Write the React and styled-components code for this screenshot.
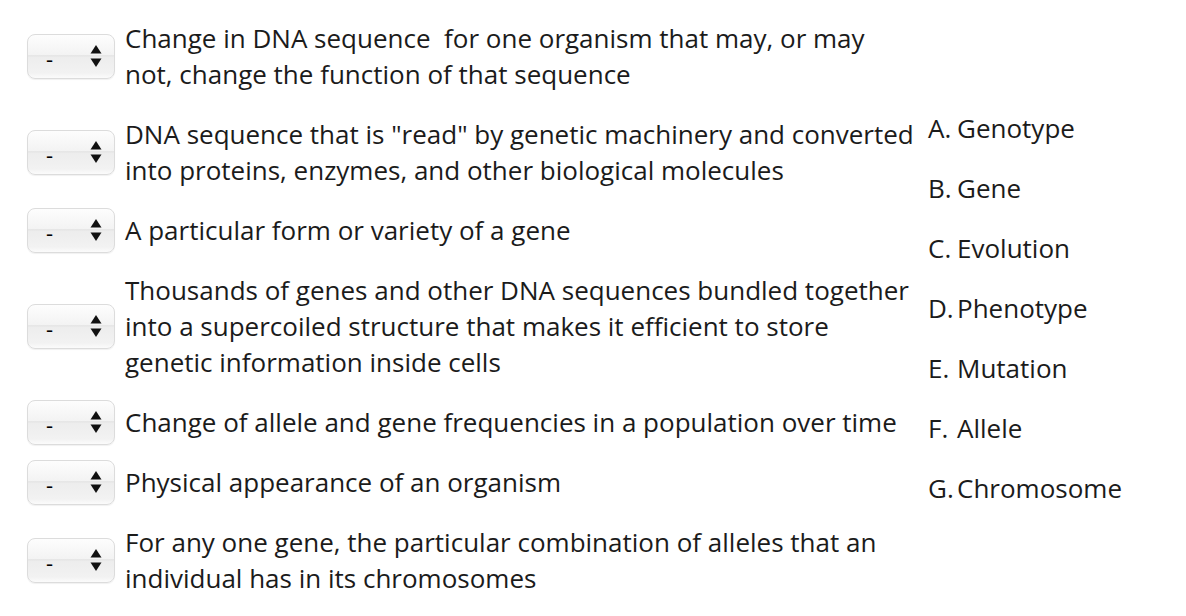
import React from "react";
import styled, { createGlobalStyle } from "styled-components";

const GlobalStyle = createGlobalStyle`
  html, body {
    margin: 0;
    padding: 0;
    background: #ffffff;
  }
  body {
    font-family: "Open Sans", "Noto Sans", sans-serif;
    color: #1b1b1b;
  }
`;

const Sheet = styled.div`
  display: flex;
  align-items: center;
  padding: 8px 0 0 27px;
`;

const Prompts = styled.div`
  display: flex;
  flex-direction: column;
`;

const Row = styled.div`
  display: flex;
  align-items: center;
`;

const Picker = styled.div`
  flex: none;
  box-sizing: border-box;
  width: 88px;
  height: 45px;
  margin: 7px 0;
  display: flex;
  align-items: center;
  justify-content: space-between;
  padding: 0 12px 0 18px;
  border: 1px solid #dcdcdc;
  border-radius: 8px;
  background: linear-gradient(
    to bottom,
    #fdfdfd 0%,
    #f3f3f3 46%,
    #e4e4e4 48%,
    #ededed 52%,
    #f2f2f2 88%,
    #fbfbfb 100%
  );
  box-shadow: 0 1px 1px rgba(0, 0, 0, 0.06);
`;

const Dash = styled.span`
  font-size: 22px;
  line-height: 1;
  color: #000;
  padding-top: 3px;
`;

const Prompt = styled.div`
  width: 790px;
  margin-left: 10px;
  padding: 12px 0;
  font-size: 26px;
  line-height: 36px;
`;

const Answers = styled.ol`
  list-style: none;
  margin: 0 0 0 13px;
  padding: 0;
  display: flex;
  flex-direction: column;
`;

const Answer = styled.li`
  display: flex;
  align-items: center;
  height: 60px;
  font-size: 26px;
`;

const Letter = styled.span`
  display: inline-block;
  width: 29px;
`;

const Arrows = () => (
  <svg width="12" height="24" viewBox="0 0 12 24" aria-hidden="true">
    <path d="M6 1 L11.5 9.5 L0.5 9.5 Z" fill="#111" />
    <path d="M6 23 L11.5 14.5 L0.5 14.5 Z" fill="#111" />
  </svg>
);

const prompts = [
  "Change in DNA sequence \u00a0for one organism that may, or may not, change the function of that sequence",
  'DNA sequence that is "read" by genetic machinery and converted into proteins, enzymes, and other biological molecules',
  "A particular form or variety of a gene",
  "Thousands of genes and other DNA sequences bundled together into a supercoiled structure that makes it efficient to store genetic information inside cells",
  "Change of allele and gene frequencies in a population over time",
  "Physical appearance of an organism",
  "For any one gene, the particular combination of alleles that an individual has in its chromosomes",
];

const answers = [
  ["A.", "Genotype"],
  ["B.", "Gene"],
  ["C.", "Evolution"],
  ["D.", "Phenotype"],
  ["E.", "Mutation"],
  ["F.", "Allele"],
  ["G.", "Chromosome"],
];

export default function App() {
  return (
    <>
      <GlobalStyle />
      <Sheet>
        <Prompts>
          {prompts.map((text) => (
            <Row key={text}>
              <Picker>
                <Dash>-</Dash>
                <Arrows />
              </Picker>
              <Prompt>{text}</Prompt>
            </Row>
          ))}
        </Prompts>
        <Answers>
          {answers.map(([letter, word]) => (
            <Answer key={letter}>
              <Letter>{letter}</Letter>
              {word}
            </Answer>
          ))}
        </Answers>
      </Sheet>
    </>
  );
}
